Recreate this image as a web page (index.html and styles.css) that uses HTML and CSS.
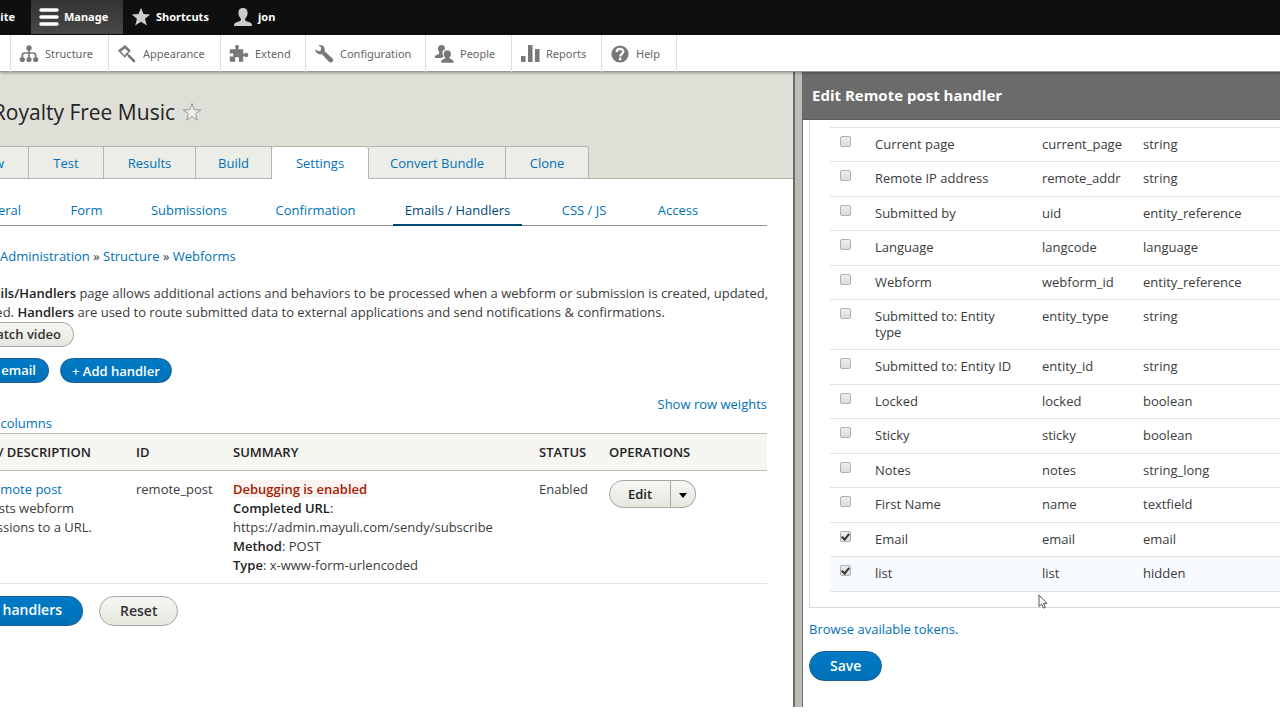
FILE: index.html
```html
<!DOCTYPE html>
<html lang="en">
<head>
<meta charset="utf-8">
<title>Emails / Handlers</title>
<link rel="stylesheet" href="styles.css">
</head>
<body>
<nav class="topbar" aria-label="Toolbar">
  <a class="top-item top-back" href="#">Back to site</a>
  <a class="top-item top-active" href="#"><svg width="20" height="20" viewBox="0 0 20 20"><g stroke="#fff" stroke-width="3.4" stroke-linecap="round"><path d="M2 3h16M2 10h16M2 17h16"/></g></svg>Manage</a>
  <a class="top-item" href="#"><svg width="20" height="20" viewBox="0 0 20 20"><path fill="#ccc" d="M10 .8l2.500 6.300 6.700.4-5.200 4.300 1.800 6.700L10 14.700l-5.800 3.800L6 11.800.8 7.500l6.700-.4z"/></svg>Shortcuts</a>
  <a class="top-item" href="#"><svg width="20" height="20" viewBox="0 0 20 20"><path fill="#ccc" d="M10 1c3 0 4.600 1.800 4.600 4.700 0 2.500-1 4.300-2.200 5.600-.5.700-.4 2.200.4 2.600l4.300 1.600c1.300.5 1.900 1.700 1.900 3.500H1c0-1.800.6-3 1.900-3.500l4.300-1.600c.8-.4.9-1.900.4-2.600C6.400 10 5.400 8.200 5.400 5.700 5.400 2.800 7 1 10 1z"/></svg>jon</a>
</nav>
<nav class="tray" aria-label="Administration menu">
  <a href="#"></a>
  <a href="#"><svg viewBox="0 0 20 20"><g fill="#787878"><circle cx="10" cy="4" r="2.700"/><circle cx="3.300" cy="15.500" r="2.600"/><circle cx="10" cy="15.500" r="2.600"/><circle cx="16.700" cy="15.500" r="2.600"/></g><path fill="none" stroke="#787878" stroke-width="1.700" d="M10 4v11M3.300 15v-3.500Q3.300 9 6 9h8q2.700 0 2.700 2.500V15"/></svg>Structure</a>
  <a href="#"><svg viewBox="0 0 20 20"><path fill="#787878" d="M8.200 1l5.500 5.500-5.800 7.200L1 6.800l1.500-1.500L8.200 1z"/><path fill="#fff" d="M8 4.400l3.200 3-3.600 4.200-3.700-4z"/><path stroke="#787878" stroke-width="2.600" stroke-linecap="round" d="M12 12l5 5"/><path stroke="#787878" stroke-width="1.500" d="M9 9l4 4"/></svg>Appearance</a>
  <a href="#"><svg viewBox="0 0 20 20"><path fill="#787878" d="M.8 5.200h5.700V3.800C5.600 3.200 5.800 1 8 1s2.500 2.200 1.500 2.800v1.400h4.700v4.500h1.300c.8-1.500 3.800-1.300 3.800 1.200s-3 2.800-3.800 1.300h-1.300v5.600H9.800v-2.200c.8-1.300-.1-2.600-1.800-2.600s-2.600 1.300-1.800 2.600v2.200H.8v-5.600h1c1 1.300 2.600.6 2.600-1.200S2.800 8.500 1.800 9.700h-1z"/></svg>Extend</a>
  <a href="#"><svg viewBox="0 0 20 20"><path fill="#787878" d="M1.300 5.200L5 7.500l2-1.300L7 3.300 4.500 1.300C7.500.6 10.500 2 10.800 5.400c.1 1.100-.2 1.900-.2 1.900l8 7.300c1.900 2.200-1.200 5.200-3.400 3.300L8 10.200C4.300 11 1.300 8.700 1.300 5.200z"/></svg>Configuration</a>
  <a href="#"><svg viewBox="0 0 20 20"><path fill="#787878" d="M7.500 1c2.400 0 3.700 1.500 3.500 4.200-2 .7-2.800 2.300-2.500 4.500.1 1 .6 2 1.200 2.800l-2.500 1.400H.8c0-2 .6-2.600 2.300-3.100 2.200-.7 2.700-1.500 1.700-3.100C3.400 5 3.600 1 7.500 1z"/><path fill="#787878" d="M13.300 6.200c2.600 0 3.800 1.700 3.600 4-.1 1.400-.6 2.300-1.300 3-.4 1 .1 1.500 1.700 2 1.700.5 2.300 1.300 2.300 3.600H7c0-2.300.6-3.100 2.300-3.600 1.600-.5 2.100-1 1.700-2-.7-.7-1.200-1.600-1.300-3-.2-2.300 1-4 3.600-4z"/></svg>People</a>
  <a href="#"><svg viewBox="0 0 20 20"><path fill="#787878" d="M1 12h4.500v6H1zM8 1h4.500v17H8zM15 5h4.500v13H15z"/></svg>Reports</a>
  <a href="#"><svg viewBox="0 0 20 20"><circle cx="10" cy="10" r="8.600" fill="#787878"/><path fill="none" stroke="#fff" stroke-width="2.300" d="M6.700 8c0-4.200 6.600-4 6.600-.4 0 2.300-3.100 2.200-3.100 5"/><circle cx="10.100" cy="15" r="1.400" fill="#fff"/></svg>Help</a>
</nav>
<div class="workspace">
  <main class="page">
    <header class="page-head">
      <h1><span class="lead">Royalty Free Music</span><svg width="20" height="20" viewBox="0 0 20 20"><path fill="#eeeee8" stroke="#999" d="M10 1.500l2.200 6.200 6.500.2-5.200 4 1.900 6.200L10 14.400l-5.400 3.700 1.900-6.200-5.200-4 6.500-.2z"/></svg></h1>
      <nav class="tabs" aria-label="Primary tabs">
        <a href="#">View</a><a href="#">Test</a><a href="#">Results</a><a href="#">Build</a><a class="on" href="#">Settings</a><a href="#">Convert Bundle</a><a href="#">Clone</a>
      </nav>
    </header>
    <div class="content">
      <nav class="subtabs" aria-label="Secondary tabs">
        <a href="#">General</a><a href="#">Form</a><a href="#">Submissions</a><a href="#">Confirmation</a><a class="on" href="#">Emails / Handlers</a><a href="#">CSS / JS</a><a href="#">Access</a>
      </nav>
      <nav class="crumbs" aria-label="Breadcrumb"><span class="home"><a href="#">Home</a> »&nbsp;</span><a href="#">Administration</a> » <a href="#">Structure</a> » <a href="#">Webforms</a></nav>
      <div class="intro">
        <p><b class="cut-a">Emails/Handlers</b> page allows additional actions and behaviors to be processed when a webform or submission is created, updated,</p>
        <p><span class="cut-b">completed.</span> <b>Handlers</b> are used to route submitted data to external applications and send notifications &amp; confirmations.</p>
      </div>
      <button class="btn small watch" type="button">Watch video</button>
      <div class="actions">
        <button class="btn small primary add-email" type="button">Add email</button>
        <button class="btn small primary" type="button"><span class="plus">+</span> Add handler</button>
      </div>
      <div class="weights"><a href="#">Show row weights</a></div>
      <div class="columns"><a href="#">Show all columns</a></div>
      <table class="handlers">
        <colgroup><col class="c1"><col class="c2"><col class="c3"><col class="c4"><col></colgroup>
        <thead><tr><th><span class="cell-cut">TITLE / DESCRIPTION</span></th><th>ID</th><th>SUMMARY</th><th>STATUS</th><th>OPERATIONS</th></tr></thead>
        <tbody><tr>
          <td><span class="cut-c"><a href="#">Remote post</a></span><span class="cut-d">Posts webform</span><span class="cut-e">submissions to a URL.</span></td>
          <td>remote_post</td>
          <td><b class="debug">Debugging is enabled</b><br><b>Completed URL</b>:<br>https://admin.mayuli.com/sendy/subscribe<br><b>Method</b>: POST<br><b>Type</b>: x-www-form-urlencoded</td>
          <td>Enabled</td>
          <td><div class="drop"><button type="button">Edit</button><button type="button" aria-label="List additional actions"><svg width="8" height="5" viewBox="0 0 8 5"><path d="M0 0h8L4 5z"/></svg></button></div></td>
        </tr></tbody>
      </table>
      <div class="form-actions">
        <button class="btn primary save-handlers" type="button">Save handlers</button>
        <button class="btn" type="button">Reset</button>
      </div>
    </div>
  </main>
  <div class="splitter"></div>
  <aside class="panel">
    <h2>Edit Remote post handler</h2>
    <div class="panel-body">
      <div class="box">
        <table class="fields">
          <colgroup><col class="f1"><col class="f2"><col class="f3"><col></colgroup>
          <tbody>
          <tr><td><input type="checkbox" id="f1"></td><td><label for="f1">Current page</label></td><td>current_page</td><td>string</td></tr>
          <tr><td><input type="checkbox" id="f2"></td><td><label for="f2">Remote IP address</label></td><td>remote_addr</td><td>string</td></tr>
          <tr><td><input type="checkbox" id="f3"></td><td><label for="f3">Submitted by</label></td><td>uid</td><td>entity_reference</td></tr>
          <tr><td><input type="checkbox" id="f4"></td><td><label for="f4">Language</label></td><td>langcode</td><td>language</td></tr>
          <tr><td><input type="checkbox" id="f5"></td><td><label for="f5">Webform</label></td><td>webform_id</td><td>entity_reference</td></tr>
          <tr><td><input type="checkbox" id="f6"></td><td><label for="f6">Submitted to: Entity<br>type</label></td><td>entity_type</td><td>string</td></tr>
          <tr><td><input type="checkbox" id="f7"></td><td><label for="f7">Submitted to: Entity ID</label></td><td>entity_id</td><td>string</td></tr>
          <tr><td><input type="checkbox" id="f8"></td><td><label for="f8">Locked</label></td><td>locked</td><td>boolean</td></tr>
          <tr><td><input type="checkbox" id="f9"></td><td><label for="f9">Sticky</label></td><td>sticky</td><td>boolean</td></tr>
          <tr><td><input type="checkbox" id="f10"></td><td><label for="f10">Notes</label></td><td>notes</td><td>string_long</td></tr>
          <tr><td><input type="checkbox" id="f11"></td><td><label for="f11">First Name</label></td><td>name</td><td>textfield</td></tr>
          <tr><td><input type="checkbox" id="f12" checked></td><td><label for="f12">Email</label></td><td>email</td><td>email</td></tr>
          <tr class="hover"><td><input type="checkbox" id="f13" checked></td><td><label for="f13">list</label></td><td>list</td><td>hidden</td></tr>
          </tbody>
        </table>
      </div>
      <a class="tokens" href="#">Browse available tokens.</a>
      <button class="btn primary save" type="button">Save</button>
    </div>
  </aside>
</div>
<svg class="pointer" width="10" height="15" viewBox="0 0 10 15"><path fill="#fff" stroke="#555" d="M1 1v11.500l2.700-2.400 1.800 4 1.800-.8-1.700-3.900H9z"/></svg>
</body>
</html>
```
FILE: styles.css
```css
*, *::after { box-sizing: border-box; }
body {
  margin: 0;
  min-height: 100vh;
  overflow: hidden;
  background: #fff;
  color: #3b3b3b;
  font: 13px/19px "Open Sans", "Noto Sans", sans-serif;
}
a { color: #0071b8; text-decoration: none; }
b { color: #222; font-weight: 600; }
button { font: inherit; cursor: pointer; }

.topbar {
  display: flex;
  height: 35px;
  background: #0f0f0f;
  font: 700 11px/34px "Noto Sans", sans-serif;
}
.top-item {
  display: flex;
  align-items: center;
  gap: 5px;
  height: 34px;
  padding: 0 8px;
  color: #fff;
  white-space: nowrap;
}
.top-back { width: 31px; padding: 0 16px 0 0; justify-content: flex-end; }
.top-active { width: 92px; background: linear-gradient(#333, #484848); }
.top-item:nth-child(3) { width: 102px; }

.tray {
  position: relative;
  display: grid;
  grid-template-columns: 11px 98px 112px 85px 120px 86px 90px 75px;
  height: 37px;
  background: #fff;
  border-bottom: 1px solid #999992;
  box-shadow: 0 1px 3px #0005;
  font: 11px/36px "Noto Sans", sans-serif;
}
.tray a {
  display: flex;
  align-items: center;
  gap: 6px;
  padding: 1px 0 0 8px;
  border-right: 1px solid #ddd;
  color: #656565;
}
.tray svg { width: 20px; height: 20px; flex: none; }

.workspace {
  display: grid;
  grid-template-columns: 793fr 10px 477fr;
  min-height: calc(100vh - 85px);
}
.page, .panel { min-width: 0; overflow: hidden; }
.page-head {
  display: flex;
  flex-direction: column;
  justify-content: space-between;
  height: 107px;
  padding-top: 26px;
  background: #dfdfd7;
  border-bottom: 1px solid #b4b5ae;
}
h1 {
  display: flex;
  align-items: center;
  gap: 7px;
  margin: 0;
  color: #222;
  font-size: 21px;
  line-height: 28px;
  font-weight: 400;
}
.lead {
  display: flex;
  justify-content: flex-end;
  width: 175px;
  white-space: nowrap;
}
.tabs {
  display: grid;
  grid-template-columns: 29px 75px 92px 76px 97px 137px 83px;
  margin-bottom: -1px;
  text-align: center;
}
.tabs a {
  height: 33px;
  line-height: 32px;
  background: #ecede7;
  border: solid #b4b5ae;
  border-width: 1px 1px 1px 0;
}
.tabs a:first-child { display: flex; justify-content: flex-end; padding-right: 24px; }
.tabs a:last-child { border-radius: 0 3px 0 0; }
.tabs .on {
  background: #fff;
  border-bottom-color: #fff;
  border-radius: 3px 3px 0 0;
}
.content { padding-right: 26px; }
.subtabs {
  display: grid;
  grid-template-columns: 46px 81px 124px 129px 155px 98px 90px;
  margin-top: 14px;
  height: 33px;
  border-bottom: 1px solid #8e929c;
  text-align: center;
  line-height: 34px;
}
.subtabs a:first-child { display: flex; justify-content: flex-end; padding-right: 25px; }
.subtabs .on {
  height: 33px;
  margin: 0 13px;
  color: #004875;
  border-bottom: 2px solid #004875;
  white-space: nowrap;
}
.crumbs { margin-top: 21px; white-space: nowrap; }
.home {
  display: inline-flex;
  justify-content: flex-end;
  width: 0;
}
.intro { margin-top: 18px; white-space: nowrap; }
.intro p { margin: 0; }
.cut-a, .cut-b {
  display: inline-flex;
  justify-content: flex-end;
  width: 76px;
}
.cut-b { width: 14px; }

.btn {
  height: 30px;
  padding: 0 20px;
  border: 1px solid #a6a6a6;
  border-radius: 15px;
  background: linear-gradient(#f6f6f3, #e7e7df);
  color: #333;
  font-size: 14px;
  line-height: 26px;
  font-weight: 600;
  white-space: nowrap;
}
.btn.small { height: 25px; padding: 0 11px; font-size: 13px; line-height: 22px; }
.btn.primary {
  border-color: #1e5c90;
  background: linear-gradient(#007bc6, #0071b8);
  color: #fff;
}
.btn.watch, .btn.add-email, .btn.save-handlers {
  display: flex;
  justify-content: flex-end;
  border-left: 0;
}
.btn.watch { width: 74px; padding-right: 12px; border-radius: 0 13px 13px 0; }
.btn.add-email { width: 49px; padding-right: 12px; border-radius: 0 13px 13px 0; }
.btn.save-handlers { width: 83px; border-radius: 0 15px 15px 0; }
.actions { display: flex; gap: 11px; margin-top: 11px; }
.plus { font-weight: 400; }
.weights { margin-top: 12px; text-align: right; }
.columns { display: flex; justify-content: flex-end; width: 52px; white-space: nowrap; }

.handlers {
  width: 100%;
  border-collapse: collapse;
  table-layout: fixed;
}
.c1 { width: 124px; }
.c2 { width: 97px; }
.c3 { width: 306px; }
.c4 { width: 70px; }
.handlers th {
  height: 37px;
  padding: 0 0 0 12px;
  background: #f5f5f2;
  border: solid #bfbfba;
  border-width: 1px 0;
  color: #222;
  text-align: left;
  font-weight: 600;
}
.handlers td {
  height: 113px;
  padding: 9px 0 0 12px;
  border-bottom: 1px solid #e6e4df;
  vertical-align: top;
  white-space: nowrap;
}
.handlers th:first-child, .handlers td:first-child { padding-left: 0; }
.cell-cut, .cut-c, .cut-d, .cut-e { display: flex; justify-content: flex-end; white-space: nowrap; }
.cell-cut { width: 91px; }
.cut-c { width: 62px; }
.cut-d { width: 74px; }
.cut-e { width: 92px; }
.debug { color: #a51b00; background: #fcf4f2; }
.drop { display: flex; }
.drop button {
  height: 28px;
  padding: 0;
  border: 1px solid #a6a6a6;
  background: linear-gradient(#f6f6f3, #e7e7df);
  color: #222;
  font-weight: 600;
}
.drop button:first-child { width: 62px; border-radius: 14px 0 0 14px; }
.drop button:last-child { width: 25px; border-left: 0; border-radius: 0 14px 14px 0; }
.drop svg { vertical-align: middle; }
.form-actions { display: flex; gap: 16px; margin-top: 12px; }

.splitter {
  background: #bcbdb5;
  border: solid #6b6b6b;
  border-width: 0 1px 0 2px;
}
.panel h2 {
  margin: 0;
  height: 48px;
  padding-left: 9px;
  background: #6b6b6b;
  border-bottom: 1px solid #5c5c5c;
  color: #fff;
  font-size: 15px;
  line-height: 46px;
  font-weight: 700;
}
.panel-body { padding-left: 6px; }
.box {
  padding: 7px 0 15px 20px;
  border: solid #d8d8d8;
  border-width: 0 0 1px 1px;
}
.fields {
  width: 100%;
  border-collapse: collapse;
  table-layout: fixed;
  border-top: 1px solid #e3e3e3;
}
.f1 { width: 33px; }
.f2 { width: 167px; }
.f3 { width: 101px; }
.fields td {
  height: 35px;
  padding: 8px 0 0 12px;
  border-bottom: 1px solid #e3e3e3;
  vertical-align: top;
  line-height: 16px;
}
.fields tr:nth-child(-n+5):nth-child(odd) td,
.fields tr:nth-child(n+7):nth-child(even) td { height: 34px; }
.fields tr:nth-child(6) td { height: 50px; }
.fields td:first-child { padding-left: 10px; }
.fields .hover { background: #f7faff; }
.fields input {
  display: flex;
  justify-content: center;
  appearance: none;
  width: 11px;
  height: 11px;
  margin: 0;
  border: 1px solid #b0b0b0;
  border-radius: 2px;
  background: linear-gradient(#eee, #dcdcdc);
}
.fields input:checked::after {
  content: "";
  width: 5px;
  height: 8px;
  border: solid #333;
  border-width: 0 2px 2px 0;
  transform: rotate(40deg);
}
.tokens { display: block; margin-top: 12px; }
.save { display: block; margin-top: 12px; }
.pointer { position: absolute; left: 1038px; top: 594px; }
```
